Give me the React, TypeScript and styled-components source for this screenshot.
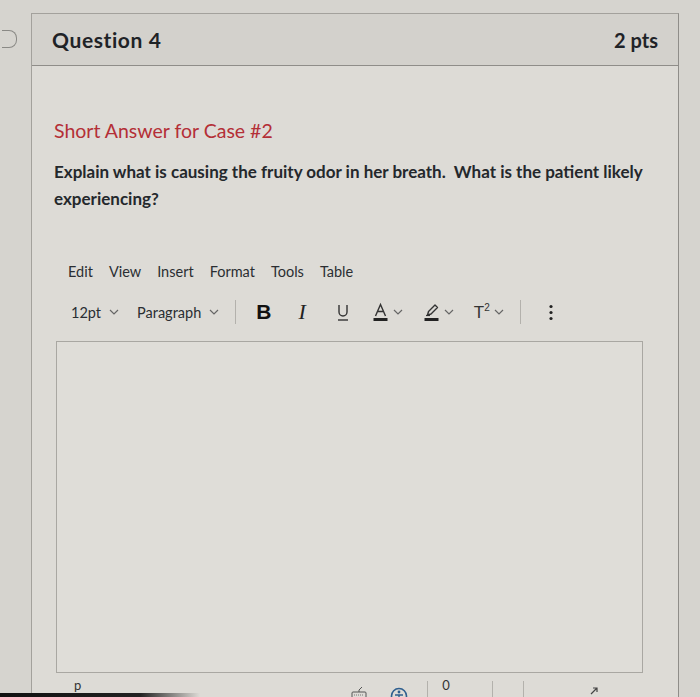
import React from "react";
import styled, { createGlobalStyle } from "styled-components";

const GlobalStyle = createGlobalStyle`
  html, body {
    margin: 0;
    padding: 0;
    background: #d6d4cf;
    font-family: Lato, "Open Sans", "Liberation Sans", sans-serif;
    color: #2d3b45;
    overflow: hidden;
  }
`;

const Page = styled.div`
  width: 700px;
  height: 697px;
  display: flex;
  flex-direction: column;
  padding-top: 13px;
  box-sizing: border-box;
  position: relative;
  overflow: hidden;
`;

const Row = styled.div`
  display: flex;
  flex: 1;
`;

const Gutter = styled.div`
  width: 31px;
  padding-top: 17px;
  flex-shrink: 0;
`;

const Flag = styled.div`
  width: 14px;
  height: 16px;
  margin-left: 2px;
  border: 1.5px solid #8a8985;
  border-left: none;
  border-radius: 0 8px 8px 0;
`;

const Card = styled.div`
  width: 646px;
  display: flex;
  flex-direction: column;
  border-left: 1px solid #a3a19c;
  border-right: 1px solid #8f8d89;
  border-top: 1px solid #a3a19c;
  background: #dddbd6;
`;

const Header = styled.div`
  height: 51px;
  display: flex;
  align-items: center;
  justify-content: space-between;
  padding: 0 20px 0 20px;
  background: #d3d1cc;
  border-bottom: 1px solid #8f8d89;
  font-size: 20px;
  font-weight: 700;
  color: #1f2327;
`;

const HeaderTitle = styled.span`
  font-size: 21px;
  letter-spacing: 0.6px;
`;

const Body = styled.div`
  display: flex;
  flex-direction: column;
  padding: 0 24px 0 22px;
  flex: 1;
`;

const CaseTitle = styled.h2`
  margin: 53px 0 0 0;
  font-size: 19.5px;
  line-height: 24px;
  font-weight: 400;
  color: #b42f37;
`;

const Prompt = styled.p`
  margin: 15px 0 0 0;
  font-size: 17px;
  line-height: 27px;
  font-weight: 700;
  color: #24282c;
  width: 600px;
`;

const MenuBar = styled.div`
  display: flex;
  gap: 16px;
  margin: 50px 0 0 14px;
  font-size: 14.5px;
  line-height: 20px;
  color: #2a2e32;
`;

const Toolbar = styled.div`
  display: flex;
  align-items: center;
  margin: 17px 0 0 17px;
  height: 26px;
  font-size: 14.5px;
  color: #2a2e32;
`;

const Drop = styled.div<{ $w?: number }>`
  display: flex;
  align-items: center;
  gap: 8px;
  margin-right: ${(p) => p.$w ?? 18}px;
`;

const Sep = styled.div<{ $ml: number }>`
  width: 1px;
  height: 24px;
  background: #b3b1ac;
  margin-left: ${(p) => p.$ml}px;
`;

const Btn = styled.div<{ $ml: number }>`
  display: flex;
  align-items: center;
  gap: 4px;
  margin-left: ${(p) => p.$ml}px;
`;

const Bold = styled.span`
  font-family: "Liberation Sans", sans-serif;
  font-weight: 700;
  font-size: 21px;
  color: #111;
`;

const Ital = styled.span`
  font-family: "Liberation Serif", serif;
  font-style: italic;
  font-size: 22px;
  color: #222;
`;

const Sup = styled.span`
  font-family: "Liberation Sans", sans-serif;
  font-size: 17px;
  color: #333;
  sup {
    font-size: 10px;
  }
`;

const Editor = styled.div`
  margin: 16px 0 0 2px;
  width: 585px;
  height: 330px;
  border: 1px solid #a9a7a2;
  background: #dfddd8;
`;

const StatusBar = styled.div`
  display: flex;
  align-items: flex-start;
  height: 24px;
  padding-top: 6px;
  font-size: 13px;
  line-height: 12px;
  color: #333;
  padding-left: 20px;
`;

const StatusItem = styled.div<{ $ml: number; $mt?: number }>`
  margin-left: ${(p) => p.$ml}px;
  margin-top: ${(p) => p.$mt ?? 0}px;
  display: flex;
`;

const StatusSep = styled.div<{ $ml: number }>`
  margin-left: ${(p) => p.$ml}px;
  width: 1px;
  height: 20px;
  margin-top: 2px;
  background: #b3b1ac;
`;

const BottomEdge = styled.div`
  position: absolute;
  left: 0;
  bottom: 0;
  width: 200px;
  height: 4px;
  background: linear-gradient(90deg, #111 0%, #222 70%, rgba(40, 40, 40, 0) 100%);
`;

const Chevron = () => (
  <svg width="10" height="6" viewBox="0 0 10 6" fill="none">
    <path d="M1 1l4 4 4-4" stroke="#666" strokeWidth="1.2" />
  </svg>
);

const Underline = () => (
  <svg width="14" height="20" viewBox="0 0 14 20" fill="none">
    <path d="M3 3v7a4 4 0 0 0 8 0V3" stroke="#333" strokeWidth="1.4" />
    <path d="M2 18h10" stroke="#333" strokeWidth="1.4" />
  </svg>
);

const TextColor = () => (
  <svg width="17" height="21" viewBox="0 0 17 21" fill="none">
    <path d="M3.5 14L8.5 2.5l5 11.5M5.5 9.5h6" stroke="#333" strokeWidth="1.4" />
    <rect x="1.5" y="16" width="14" height="3" fill="#222" />
  </svg>
);

const Highlight = () => (
  <svg width="17" height="21" viewBox="0 0 17 21" fill="none">
    <path d="M4.5 13l1-3.5 6.5-6.5 2.5 2.5-6.5 6.5-3.5 1z" stroke="#333" strokeWidth="1.4" strokeLinejoin="round" />
    <path d="M3 13.5h4" stroke="#333" strokeWidth="1.2" />
    <rect x="1.5" y="16" width="14" height="3" fill="#222" />
  </svg>
);

const Kebab = () => (
  <svg width="4" height="17" viewBox="0 0 4 17">
    <circle cx="2" cy="2.5" r="1.6" fill="#222" />
    <circle cx="2" cy="8.5" r="1.6" fill="#222" />
    <circle cx="2" cy="14.5" r="1.6" fill="#222" />
  </svg>
);

const Keyboard = () => (
  <svg width="16" height="14" viewBox="0 0 16 14" fill="none">
    <path d="M8 5V3l3-3" stroke="#555" strokeWidth="1" />
    <rect x="1" y="5" width="14" height="8" rx="1" stroke="#555" strokeWidth="1" />
    <path d="M3 8h10" stroke="#777" strokeWidth="1" strokeDasharray="1 1" />
  </svg>
);

const Access = () => (
  <svg width="18" height="18" viewBox="0 0 18 18" fill="none">
    <circle cx="9" cy="9" r="7.5" stroke="#2f5f8f" strokeWidth="1.6" />
    <circle cx="9" cy="5" r="1.4" fill="#2f5f8f" />
    <path d="M5 8h8M9 8v5" stroke="#2f5f8f" strokeWidth="1.4" />
  </svg>
);

const Expand = () => (
  <svg width="10" height="10" viewBox="0 0 10 10" fill="none">
    <path d="M2 8l6-6M4 2h4v4" stroke="#444" strokeWidth="1.2" />
  </svg>
);

export default function App() {
  return (
    <>
      <GlobalStyle />
      <Page>
        <Row>
          <Gutter>
            <Flag />
          </Gutter>
          <Card>
            <Header>
              <HeaderTitle>Question 4</HeaderTitle>
              <span>2 pts</span>
            </Header>
            <Body>
              <CaseTitle>Short Answer for Case #2</CaseTitle>
              <Prompt>
                Explain what is causing the fruity odor in her breath.&nbsp; What is the patient likely
                experiencing?
              </Prompt>
              <MenuBar>
                <span>Edit</span>
                <span>View</span>
                <span>Insert</span>
                <span>Format</span>
                <span>Tools</span>
                <span>Table</span>
              </MenuBar>
              <Toolbar>
                <Drop>
                  <span>12pt</span>
                  <Chevron />
                </Drop>
                <Drop $w={0}>
                  <span>Paragraph</span>
                  <Chevron />
                </Drop>
                <Sep $ml={16} />
                <Btn $ml={20}>
                  <Bold>B</Bold>
                </Btn>
                <Btn $ml={27}>
                  <Ital>I</Ital>
                </Btn>
                <Btn $ml={30}>
                  <Underline />
                </Btn>
                <Btn $ml={22}>
                  <TextColor />
                  <Chevron />
                </Btn>
                <Btn $ml={20}>
                  <Highlight />
                  <Chevron />
                </Btn>
                <Btn $ml={20}>
                  <Sup>
                    T<sup>2</sup>
                  </Sup>
                  <Chevron />
                </Btn>
                <Sep $ml={16} />
                <Btn $ml={28}>
                  <Kebab />
                </Btn>
              </Toolbar>
              <Editor />
              <StatusBar>
                <span>p</span>
                <StatusItem $ml={270} $mt={8}>
                  <Keyboard />
                </StatusItem>
                <StatusItem $ml={23} $mt={8}>
                  <Access />
                </StatusItem>
                <StatusSep $ml={19} />
                <StatusItem $ml={14}>0</StatusItem>
                <StatusSep $ml={42} />
                <StatusSep $ml={30} />
                <StatusItem $ml={65} $mt={7}>
                  <Expand />
                </StatusItem>
              </StatusBar>
            </Body>
          </Card>
        </Row>
        <BottomEdge />
      </Page>
    </>
  );
}
